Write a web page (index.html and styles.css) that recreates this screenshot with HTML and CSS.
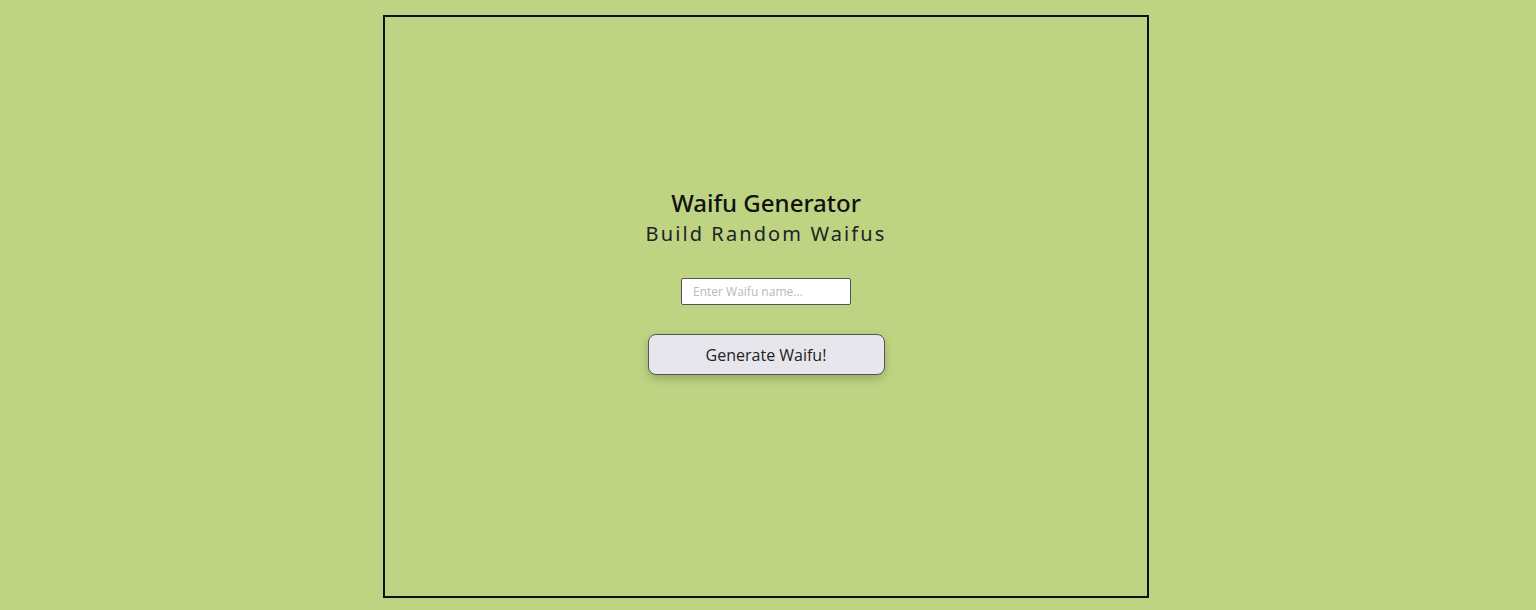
FILE: index.html
```html
<!DOCTYPE html>
<html lang="en">
<head>
  <meta charset="UTF-8" />
  <title>Waifu Generator</title>
  <link rel="stylesheet" href="styles.css">
</head>
<body>
  <div class="frame">
    <h1 class="title">Waifu Generator</h1>
    <h2 class="subtitle">Build Random Waifus</h2>
    <input type="text" class="name-input" placeholder="Enter Waifu name...">
    <button class="generate-btn">Generate Waifu!</button>
  </div>
</body>
</html>
```

FILE: styles.css
```css
body {
  margin: 0;
  background: #BFD483;
  font-family: "Open Sans", "Noto Sans", sans-serif;
}

.frame {
  box-sizing: border-box;
  width: 766px;
  height: 583px;
  margin: 15px 0 0 383px;
  border: 2px solid #111;
  display: flex;
  flex-direction: column;
  align-items: center;
  padding-top: 170px;
}

.title {
  margin: 0;
  font-family: "Noto Sans", sans-serif;
  font-size: 24px;
  font-weight: 500;
  color: #111;
  line-height: 32px;
}

.subtitle {
  margin: 0;
  font-family: "Noto Sans", sans-serif;
  font-size: 20px;
  font-weight: 400;
  letter-spacing: 2.1px;
  color: #222;
  line-height: 30px;
}

.name-input {
  box-sizing: border-box;
  margin-top: 29px;
  width: 170px;
  height: 27px;
  padding: 0 11px;
  border: 1px solid #555;
  border-radius: 2px;
  background: #fff;
  font-family: "Open Sans", sans-serif;
  font-size: 12px;
  outline: none;
}

.name-input::placeholder {
  color: #b8b8c0;
}

.generate-btn {
  box-sizing: border-box;
  margin-top: 29px;
  width: 237px;
  height: 41px;
  border: 1px solid #555;
  border-radius: 8px;
  background: #E6E6EC;
  color: #222;
  font-family: "Open Sans", sans-serif;
  font-size: 16px;
  box-shadow: 0 4px 10px rgba(0, 0, 0, 0.2);
  cursor: pointer;
}
```
